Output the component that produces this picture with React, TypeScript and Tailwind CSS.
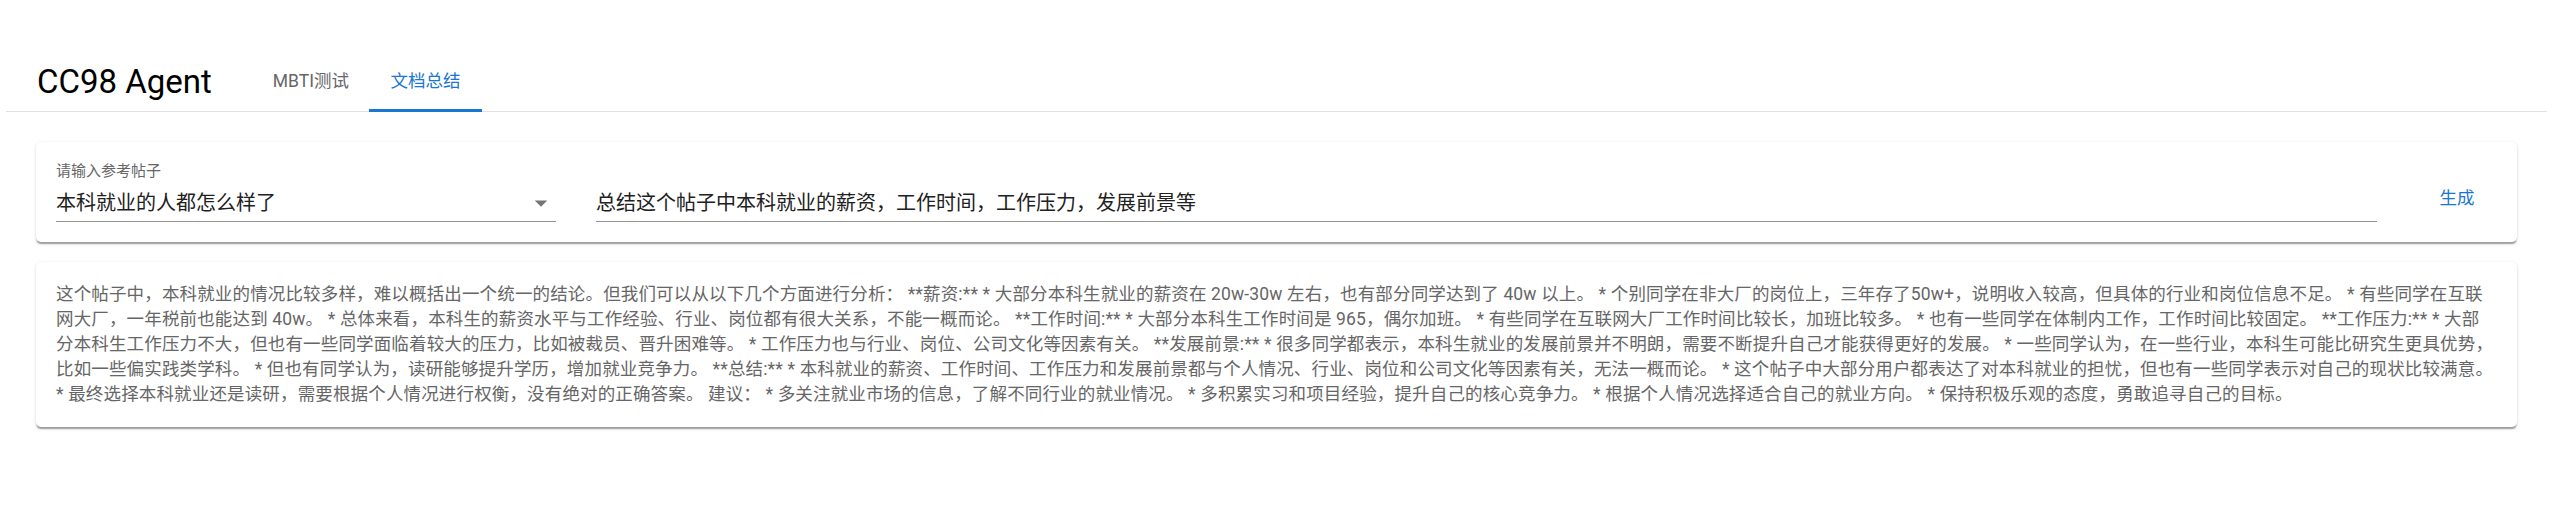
import React, { useState } from 'react';

// summary text, split where the reference wraps
const summaryLines = [
  '这个帖子中，本科就业的情况比较多样，难以概括出一个统一的结论。但我们可以从以下几个方面进行分析： **薪资:** * 大部分本科生就业的薪资在 20w-30w 左右，也有部分同学达到了 40w 以上。 * 个别同学在非大厂的岗位上，三年存了50w+，说明收入较高，但具体的行业和岗位信息不足。 * 有些同学在互联',
  '网大厂，一年税前也能达到 40w。 * 总体来看，本科生的薪资水平与工作经验、行业、岗位都有很大关系，不能一概而论。 **工作时间:** * 大部分本科生工作时间是 965，偶尔加班。 * 有些同学在互联网大厂工作时间比较长，加班比较多。 * 也有一些同学在体制内工作，工作时间比较固定。 **工作压力:** * 大部',
  '分本科生工作压力不大，但也有一些同学面临着较大的压力，比如被裁员、晋升困难等。 * 工作压力也与行业、岗位、公司文化等因素有关。 **发展前景:** * 很多同学都表示，本科生就业的发展前景并不明朗，需要不断提升自己才能获得更好的发展。 * 一些同学认为，在一些行业，本科生可能比研究生更具优势，',
  '比如一些偏实践类学科。 * 但也有同学认为，读研能够提升学历，增加就业竞争力。 **总结:** * 本科就业的薪资、工作时间、工作压力和发展前景都与个人情况、行业、岗位和公司文化等因素有关，无法一概而论。 * 这个帖子中大部分用户都表达了对本科就业的担忧，但也有一些同学表示对自己的现状比较满意。',
  '* 最终选择本科就业还是读研，需要根据个人情况进行权衡，没有绝对的正确答案。 建议： * 多关注就业市场的信息，了解不同行业的就业情况。 * 多积累实习和项目经验，提升自己的核心竞争力。 * 根据个人情况选择适合自己的就业方向。 * 保持积极乐观的态度，勇敢追寻自己的目标。',
];

const tabs = ['MBTI测试', '文档总结'];

const paperShadow =
  'shadow-[0_2.5px_1.25px_-1.25px_rgba(0,0,0,0.2),0_1.25px_1.25px_0_rgba(0,0,0,0.14),0_1.25px_3.75px_0_rgba(0,0,0,0.12)]';

export default function App() {
  const [tab, setTab] = useState(1);
  const [prompt, setPrompt] = useState('总结这个帖子中本科就业的薪资，工作时间，工作压力，发展前景等');

  return (
    <div className="min-h-screen bg-white font-[Roboto,'Noto_Sans_CJK_SC',sans-serif]">
      {/* Header */}
      <header className="mx-[6px] h-[112px] border-b border-[#e0e0e0] flex items-end pl-[31px]">
        <div className="h-[60px] flex items-center">
          <h1 className="text-[33px] leading-none text-black">CC98 Agent</h1>
        </div>
        <nav className="ml-[41px] flex h-[60px]">
          {tabs.map((t, i) => (
            <button
              key={t}
              onClick={() => setTab(i)}
              className={`relative min-w-[113px] px-5 flex items-center justify-center text-[17.5px] ${
                tab === i ? 'text-[#1976d2]' : 'text-[#666666]'
              }`}
            >
              {t}
              {tab === i && <span className="absolute left-0 right-0 -bottom-px h-[3px] bg-[#1976d2]" />}
            </button>
          ))}
        </nav>
      </header>

      <main className="px-9 pt-[30px] flex flex-col gap-5">
        {/* Query card */}
        <section className={`rounded-[5px] bg-white p-5 flex items-end gap-10 ${paperShadow}`}>
          <div className="w-[500px] flex flex-col">
            <label className="text-[15px] leading-[18px] text-[#666666]">请输入参考帖子</label>
            <div className="mt-1 h-[38px] border-b border-[#949494] flex items-center justify-between">
              <span className="text-[20px] text-[#212121]">本科就业的人都怎么样了</span>
              <svg viewBox="0 0 24 24" className="w-[30px] h-[30px] fill-[#757575]">
                <path d="M7 10l5 5 5-5z" />
              </svg>
            </div>
          </div>
          <div className="flex-1 h-[38px] border-b border-[#949494] flex items-center">
            <input
              value={prompt}
              onChange={e => setPrompt(e.target.value)}
              className="w-full bg-transparent text-[20px] text-[#212121] outline-none"
            />
          </div>
          <button className="w-[80px] h-[45px] rounded-[5px] text-[17.5px] text-[#1976d2] mb-px">生成</button>
        </section>

        {/* Result card */}
        <section className={`rounded-[5px] bg-white p-5 text-[17.5px] leading-[25px] tracking-[0.15px] text-[#666666] ${paperShadow}`}>
          {summaryLines.map((line, i) => (
            <React.Fragment key={i}>
              {i > 0 && <br />}
              {line}
            </React.Fragment>
          ))}
        </section>
      </main>
    </div>
  );
}
